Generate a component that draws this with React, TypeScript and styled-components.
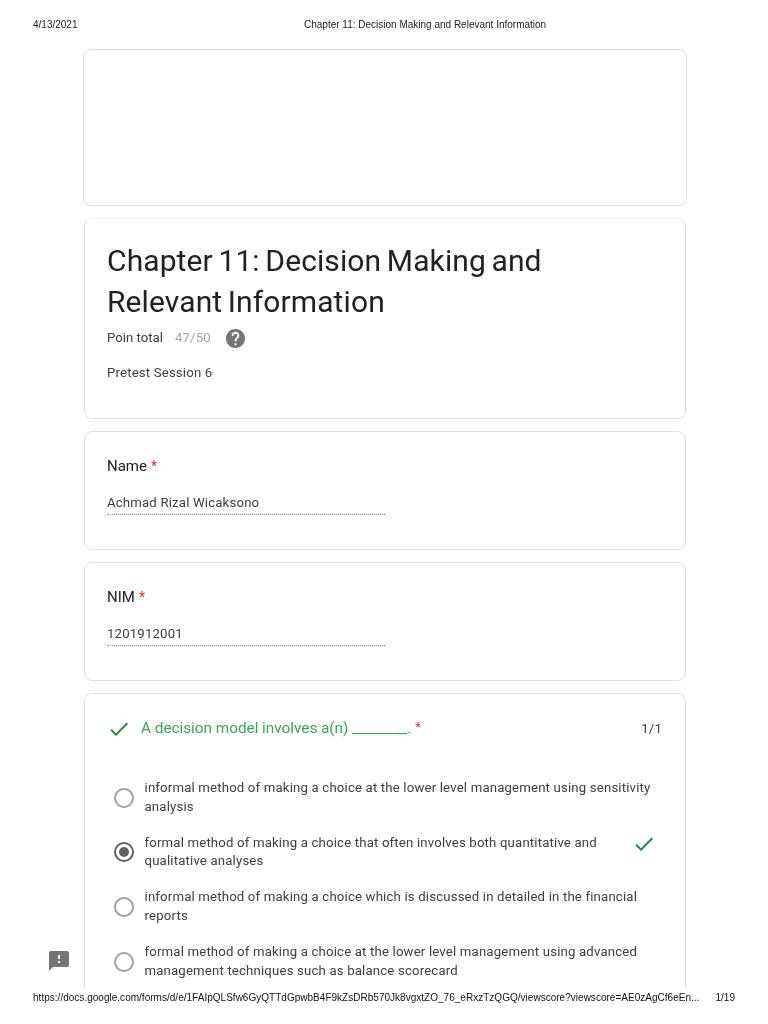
import React from "react";
import styled, { createGlobalStyle } from "styled-components";

const Global = createGlobalStyle`
  html, body { margin: 0; padding: 0; background: #fff; }
  body { font-family: Roboto, "Liberation Sans", sans-serif; }
`;

const Page = styled.div`
  position: relative;
  width: 768px;
  height: 1024px;
  overflow: hidden;
  display: flex;
  flex-direction: column;
  background: #fff;
  filter: blur(0.3px);
`;

const PrintHeader = styled.header`
  height: 49px;
  flex: none;
  display: grid;
  grid-template-columns: 271px auto;
  padding: 18px 33px 0;
  box-sizing: border-box;
  font: 10px/13px "Liberation Sans", Arial, sans-serif;
  color: #222;
`;

const Main = styled.main`
  flex: none;
  height: 940px;
  overflow: hidden;
  display: flex;
  flex-direction: column;
  gap: 12px;
  padding: 0 81px 0 83px;
`;

const Card = styled.section<{ $h: number; $inset?: boolean }>`
  flex: none;
  box-sizing: border-box;
  height: ${(p) => p.$h}px;
  margin: 0 ${(p) => (p.$inset ? 1 : 0)}px;
  background: #fff;
  border: 1px solid #e2e2e2;
  border-radius: 8px;
`;

const TitleCard = styled(Card)`
  padding: 21px 22px 0;
  border-top-color: #f4f4f4;
`;

const FormTitle = styled.h1`
  margin: 0;
  max-width: 520px;
  font: 400 30px/41px Roboto, sans-serif;
  letter-spacing: 0.1px;
  word-spacing: -1.9px;
  color: #202124;
`;

const ScoreRow = styled.div`
  display: flex;
  align-items: center;
  height: 24px;
  margin-top: 3px;
  font-size: 13.2px;
  color: #3c4043;
`;

const ScoreValue = styled.span`
  margin-left: 12px;
  color: #a6a6a6;
  letter-spacing: 0.17px;
`;

const HelpIcon = styled.svg`
  width: 19px;
  height: 19px;
  margin: 2px 0 0 15px;
  fill: #757575;
`;

const Description = styled.p`
  margin: 14px 0 0;
  font-size: 13.2px;
  line-height: 20px;
  letter-spacing: 0.17px;
  color: #3c4043;
`;

const FieldCard = styled(Card)`
  padding: 23px 22px 0;
`;

const FieldLabel = styled.div`
  font-size: 15px;
  line-height: 22px;
  color: #202124;
`;

const Asterisk = styled.span`
  color: #d93025;
  margin-left: 4px;
  font-size: 14px;
`;

const FieldValue = styled.div`
  width: 278px;
  margin-top: 16px;
  padding-bottom: 1px;
  font-size: 13.2px;
  line-height: 20px;
  letter-spacing: 0.17px;
  color: #3c4043;
  border-bottom: 1px dotted #8a8a8a;
`;

const QuestionCard = styled(Card)`
  padding: 22px 23px 0 22px;
  border-bottom: none;
  border-radius: 8px 8px 0 0;
`;

const QuestionHead = styled.div`
  display: flex;
  align-items: center;
  height: 24px;
  font-size: 15.4px;
`;

const QuestionText = styled.span`
  flex: 1;
  margin-left: 10px;
  color: #34a853;
  letter-spacing: -0.05px;
`;

const QuestionAsterisk = styled.span`
  color: #d93025;
  font-size: 13px;
  margin-left: 4px;
  vertical-align: 2px;
`;

const Points = styled.span`
  font-size: 13.2px;
  letter-spacing: 0.17px;
  color: #3c4043;
`;

const CheckIcon = styled.svg`
  width: 24px;
  height: 24px;
  fill: #1e8e3e;
  flex: none;
`;

const HeadCheck = styled(CheckIcon)`
  margin-top: 2px;
`;

const Options = styled.div`
  margin-top: 39px;
  display: flex;
  flex-direction: column;
  gap: 17.3px;
`;

const Option = styled.div`
  display: flex;
  align-items: center;
  padding-left: 7px;
`;

const Radio = styled.span<{ $on?: boolean }>`
  flex: none;
  box-sizing: border-box;
  width: 20px;
  height: 20px;
  border-radius: 50%;
  border: 2px solid ${(p) => (p.$on ? "#5f6368" : "#9aa0a6")};
  display: flex;
  align-items: center;
  justify-content: center;
  &::after {
    content: "";
    display: ${(p) => (p.$on ? "block" : "none")};
    width: 10px;
    height: 10px;
    border-radius: 50%;
    background: #5f6368;
  }
`;

const OptionText = styled.span`
  flex: 1;
  margin-left: 10.5px;
  font-size: 13.2px;
  line-height: 18.7px;
  letter-spacing: 0.17px;
  color: #3c4043;
`;

const OptionCheck = styled(CheckIcon)`
  align-self: flex-start;
  margin: -2px 6px 0 24px;
`;

const PrintFooter = styled.footer`
  flex: none;
  display: flex;
  justify-content: space-between;
  padding: 2px 33px 0;
  font: 10px/13px "Liberation Sans", Arial, sans-serif;
  letter-spacing: 0.02px;
  color: #111;
  white-space: nowrap;
`;

const FeedbackButton = styled.svg`
  position: absolute;
  left: 47px;
  top: 949px;
  width: 24px;
  height: 24px;
  fill: #757575;
`;

const CHECK = "M9 16.17L4.83 12l-1.42 1.41L9 19 21 7l-1.41-1.41z";

const options = [
  { text: "informal method of making a choice at the lower level management using sensitivity analysis" },
  { text: "formal method of making a choice that often involves both quantitative and qualitative analyses", on: true },
  { text: "informal method of making a choice which is discussed in detailed in the financial reports" },
  { text: "formal method of making a choice at the lower level management using advanced management techniques such as balance scorecard" },
];

export default function App() {
  return (
    <Page>
      <Global />
      <PrintHeader>
        <span>4/13/2021</span>
        <span>Chapter 11: Decision Making and Relevant Information</span>
      </PrintHeader>
      <Main>
        <Card $h={157} />
        <TitleCard $h={201} $inset>
          <FormTitle>Chapter 11: Decision Making and Relevant Information</FormTitle>
          <ScoreRow>
            Poin total
            <ScoreValue>47/50</ScoreValue>
            <HelpIcon viewBox="2 2 20 20">
              <path d="M12 2C6.48 2 2 6.48 2 12s4.48 10 10 10 10-4.48 10-10S17.52 2 12 2zm1 17h-2v-2h2v2zm2.07-7.75l-.9.92C13.45 12.9 13 13.5 13 15h-2v-.5c0-1.1.45-2.1 1.17-2.83l1.24-1.26c.37-.36.59-.86.59-1.41 0-1.1-.9-2-2-2s-2 .9-2 2H8c0-2.21 1.79-4 4-4s4 1.79 4 4c0 .88-.36 1.68-.93 2.25z" />
            </HelpIcon>
          </ScoreRow>
          <Description>Pretest Session 6</Description>
        </TitleCard>
        <FieldCard $h={119} $inset>
          <FieldLabel>Name<Asterisk>*</Asterisk></FieldLabel>
          <FieldValue>Achmad Rizal Wicaksono</FieldValue>
        </FieldCard>
        <FieldCard $h={119} $inset>
          <FieldLabel>NIM<Asterisk>*</Asterisk></FieldLabel>
          <FieldValue>1201912001</FieldValue>
        </FieldCard>
        <QuestionCard $h={320} $inset>
          <QuestionHead>
            <HeadCheck viewBox="0 0 24 24"><path d={CHECK} /></HeadCheck>
            <QuestionText>A decision model involves a(n) ________.<QuestionAsterisk>*</QuestionAsterisk></QuestionText>
            <Points>1/1</Points>
          </QuestionHead>
          <Options>
            {options.map((o) => (
              <Option key={o.text}>
                <Radio $on={o.on} />
                <OptionText>{o.text}</OptionText>
                {o.on && <OptionCheck viewBox="0 0 24 24"><path d={CHECK} /></OptionCheck>}
              </Option>
            ))}
          </Options>
        </QuestionCard>
      </Main>
      <PrintFooter>
        <span>https://docs.google.com/forms/d/e/1FAIpQLSfw6GyQTTdGpwbB4F9kZsDRb570Jk8vgxtZO_76_eRxzTzQGQ/viewscore?viewscore=AE0zAgCf6eEn...</span>
        <span>1/19</span>
      </PrintFooter>
      <FeedbackButton viewBox="0 0 24 24">
        <path d="M20 2H4c-1.1 0-1.99.9-1.99 2L2 22l4-4h14c1.1 0 2-.9 2-2V4c0-1.1-.9-2-2-2zm-7 12h-2v-2h2v2zm0-4h-2V6h2v4z" />
      </FeedbackButton>
    </Page>
  );
}
